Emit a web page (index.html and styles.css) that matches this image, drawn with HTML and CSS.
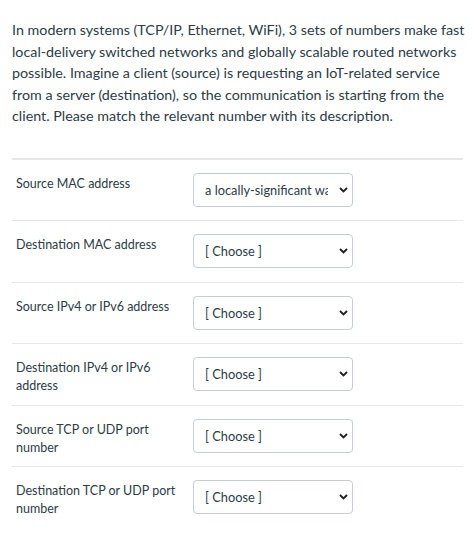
FILE: index.html
```html
<!DOCTYPE html>
<html>
<head>
<meta charset="utf-8">
<link rel="stylesheet" href="styles.css">
</head>
<body>
<div class="question">
  <p class="prompt">In modern systems (TCP/IP, Ethernet, WiFi), 3 sets of numbers make fast local-delivery switched networks and globally scalable routed networks possible. Imagine a client (source) is requesting an IoT-related service from a server (destination), so the communication is starting from the client. Please match the relevant number with its description.</p>
  <div class="answers">
    <div class="row">
      <div class="label">Source MAC address</div>
      <div class="select-wrap">
        <select class="select"><option>a locally-significant way to identify the client</option></select>
        <svg class="chev" width="9" height="6" viewBox="0 0 9 6"><path d="M1 1l3.5 3.5L8 1" fill="none" stroke="#222" stroke-width="1.9"/></svg>
      </div>
    </div>
    <div class="row">
      <div class="label">Destination MAC address</div>
      <div class="select-wrap">
        <select class="select"><option>[ Choose ]</option></select>
        <svg class="chev" width="9" height="6" viewBox="0 0 9 6"><path d="M1 1l3.5 3.5L8 1" fill="none" stroke="#222" stroke-width="1.9"/></svg>
      </div>
    </div>
    <div class="row">
      <div class="label">Source IPv4 or IPv6 address</div>
      <div class="select-wrap">
        <select class="select"><option>[ Choose ]</option></select>
        <svg class="chev" width="9" height="6" viewBox="0 0 9 6"><path d="M1 1l3.5 3.5L8 1" fill="none" stroke="#222" stroke-width="1.9"/></svg>
      </div>
    </div>
    <div class="row">
      <div class="label">Destination IPv4 or IPv6 address</div>
      <div class="select-wrap">
        <select class="select"><option>[ Choose ]</option></select>
        <svg class="chev" width="9" height="6" viewBox="0 0 9 6"><path d="M1 1l3.5 3.5L8 1" fill="none" stroke="#222" stroke-width="1.9"/></svg>
      </div>
    </div>
    <div class="row">
      <div class="label">Source TCP or UDP port number</div>
      <div class="select-wrap">
        <select class="select"><option>[ Choose ]</option></select>
        <svg class="chev" width="9" height="6" viewBox="0 0 9 6"><path d="M1 1l3.5 3.5L8 1" fill="none" stroke="#222" stroke-width="1.9"/></svg>
      </div>
    </div>
    <div class="row">
      <div class="label">Destination TCP or UDP port number</div>
      <div class="select-wrap">
        <select class="select"><option>[ Choose ]</option></select>
        <svg class="chev" width="9" height="6" viewBox="0 0 9 6"><path d="M1 1l3.5 3.5L8 1" fill="none" stroke="#222" stroke-width="1.9"/></svg>
      </div>
    </div>
  </div>
</div>
</body>
</html>
```

FILE: styles.css
```css
html, body {
  margin: 0;
  padding: 0;
  background: #fff;
}
body {
  font-family: Lato, "Open Sans", sans-serif;
  color: #2d3b45;
}
.question {
  padding: 0 11px 0 12px;
}
.prompt {
  margin: 19px -6px 0 0;
  font-size: 14.3px;
  line-height: 21.6px;
  color: #2d3b45;
}
.answers {
  margin-top: 31px;
}
.row {
  display: flex;
  align-items: flex-start;
  border-top: 1px solid #e4e6e8;
  padding: 13px 0 0 4px;
  height: 47.4px;
}
.row:first-child {
  border-top-width: 2px;
}
.label {
  width: 177px;
  flex: none;
  font-size: 12.5px;
  line-height: 18px;
  padding-top: 2px;
}
.select-wrap {
  position: relative;
  width: 160px;
  height: 34px;
}
.select {
  -webkit-appearance: none;
  appearance: none;
  box-sizing: border-box;
  width: 160px;
  height: 34px;
  margin: 0;
  border: 1px solid #c7cdd1;
  border-radius: 4px;
  background: #fff;
  font-family: Lato, "Open Sans", sans-serif;
  font-size: 12.8px;
  color: #2d3b45;
  padding: 0 24px 0 11px;
  white-space: nowrap;
  overflow: hidden;
}
.chev {
  position: absolute;
  right: 5px;
  top: 14px;
  pointer-events: none;
}
```
